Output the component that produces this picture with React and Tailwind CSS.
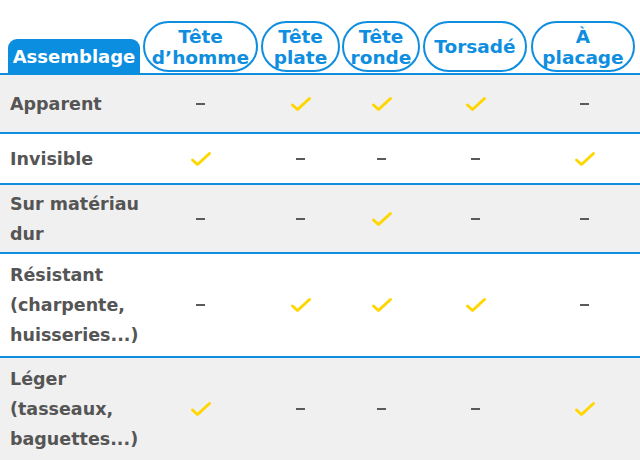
import React from "react";

function Check() {
  return (
    <svg width="22" height="16" viewBox="0 0 22 16" className="block">
      <path d="M2.5 9 L7.5 13.5 L19.5 2.5" fill="none" stroke="#ffd600" strokeWidth="3" strokeLinecap="round" strokeLinejoin="round" />
    </svg>
  );
}

function Dash() {
  return <div className="w-[9px] h-[2px] bg-[#5a5a5a]" />;
}

const rows = [
  { label: ["Apparent"], h: "h-[57px]", bg: "bg-[#f0f0f0]", vals: [0, 1, 1, 1, 0], first: true },
  { label: ["Invisible"], h: "h-[51px]", bg: "bg-white", vals: [1, 0, 0, 0, 1] },
  { label: ["Sur matériau", "dur"], h: "h-[69px]", bg: "bg-[#f0f0f0]", vals: [0, 0, 1, 0, 0] },
  { label: ["Résistant", "(charpente,", "huisseries...)"], h: "h-[104px]", bg: "bg-white", vals: [0, 1, 1, 1, 0] },
  { label: ["Léger", "(tasseaux,", "baguettes...)"], h: "h-[104px]", bg: "bg-[#f0f0f0]", vals: [1, 0, 0, 0, 1] },
];

function Pill({ lines, className }) {
  return (
    <div className={`h-[51px] rounded-full border-2 border-[#0f8ee0] flex flex-col items-center justify-center text-[#0f8ee0] text-[18.5px] font-bold leading-[21px] ${className}`}>
      {lines.map((l, i) => (
        <span key={i} className="whitespace-nowrap">{l}</span>
      ))}
    </div>
  );
}

export default function App() {
  return (
    <div className="w-[640px] h-[460px] overflow-hidden bg-white" style={{ fontFamily: '"DejaVu Sans", sans-serif' }}>
      <div className="h-[75px] flex items-end border-b-2 border-[#0f8ee0]">
        <div className="ml-[8px] w-[132px] h-[34px] rounded-t-[9px] bg-[#0b8de0] text-white text-[18px] font-bold flex items-center justify-center">
          Assemblage
        </div>
        <Pill lines={["Tête", "d’homme"]} className="ml-[3px] w-[115px] mb-[1px]" />
        <Pill lines={["Tête", "plate"]} className="ml-[3px] w-[79px] mb-[1px]" />
        <Pill lines={["Tête", "ronde"]} className="ml-[2px] w-[78px] mb-[1px]" />
        <Pill lines={["Torsadé"]} className="ml-[3px] w-[104px] mb-[1px]" />
        <Pill lines={["À", "placage"]} className="ml-[4px] w-[104px] mb-[1px]" />
      </div>
      {rows.map((r, i) => (
        <div
          key={i}
          className={`grid grid-cols-[141px_119px_81px_81px_107px_1fr] items-center ${r.h} ${r.bg} ${r.first ? "" : "border-t-2 border-[#0f8ee0]"}`}
        >
          <div className="pl-[10px] text-[#555555] text-[17.5px] font-bold leading-[30px] whitespace-nowrap">
            {r.label.map((l, j) => (
              <div key={j}>{l}</div>
            ))}
          </div>
          {r.vals.map((v, j) => (
            <div key={j} className="flex items-center justify-center">
              {v ? <Check /> : <Dash />}
            </div>
          ))}
        </div>
      ))}
    </div>
  );
}
